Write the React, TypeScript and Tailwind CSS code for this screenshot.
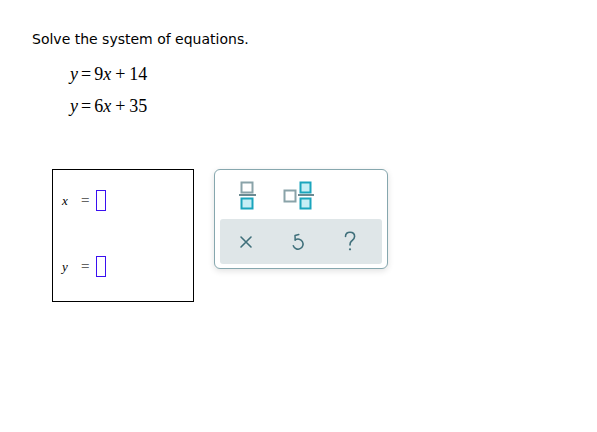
import React from "react";

function FracIcon() {
  return (
    <svg width="20" height="30" viewBox="0 0 20 30">
      <rect x="3.5" y="2.5" width="11" height="10" fill="#fff" stroke="#8aa3a9" strokeWidth="2" />
      <rect x="1" y="14" width="17" height="2" fill="#6b8a92" />
      <rect x="3.5" y="18.5" width="11" height="10" fill="#c6eef5" stroke="#1aa5bd" strokeWidth="2" />
    </svg>
  );
}

function MixedIcon() {
  return (
    <svg width="32" height="30" viewBox="0 0 32 30">
      <rect x="1.5" y="10.5" width="11" height="11" fill="#fff" stroke="#8aa3a9" strokeWidth="2" />
      <rect x="17.5" y="2.5" width="10" height="10" fill="#c6eef5" stroke="#1aa5bd" strokeWidth="2" />
      <rect x="15" y="14" width="16" height="2" fill="#6b8a92" />
      <rect x="17.5" y="18.5" width="10" height="10" fill="#c6eef5" stroke="#1aa5bd" strokeWidth="2" />
    </svg>
  );
}

function XIcon() {
  return (
    <svg width="14" height="14" viewBox="0 0 14 14">
      <path d="M2 2 L12 12 M12 2 L2 12" stroke="#3f6f7a" strokeWidth="1.6" strokeLinecap="round" />
    </svg>
  );
}

function UndoIcon() {
  return (
    <svg width="16" height="20" viewBox="0 0 16 20">
      <path d="M5.2 8 A5 5 0 1 1 3.3 13.71" fill="none" stroke="#3f6f7a" strokeWidth="1.5" strokeLinecap="round" />
      <path d="M8.8 2.6 L5 3.4 L5.2 8" fill="none" stroke="#3f6f7a" strokeWidth="1.5" strokeLinecap="round" strokeLinejoin="round" />
    </svg>
  );
}

function QIcon() {
  return (
    <svg width="14" height="22" viewBox="0 0 14 22">
      <path d="M2.5 5.5 C2.5 2.5 4.5 1.2 7 1.2 C9.8 1.2 11.6 3 11.6 5.5 C11.6 8 9.6 9 8.2 10.3 C7.2 11.2 7 12 7 14" fill="none" stroke="#3f6f7a" strokeWidth="1.6" strokeLinecap="round" />
      <circle cx="7" cy="18.3" r="1.1" fill="#3f6f7a" />
    </svg>
  );
}

function Eq({ a, b }: { a: string; b: string }) {
  return (
    <div className="flex items-baseline text-[18px] leading-[32px] text-black" style={{ fontFamily: '"Liberation Serif", serif' }}>
      <span className="italic">y</span>
      <span className="mx-[3px]">=</span>
      <span>{a}</span>
      <span className="italic">x</span>
      <span className="mx-[4px]">+</span>
      <span>{b}</span>
    </div>
  );
}

function Row({ v }: { v: string }) {
  return (
    <div className="flex items-center h-[21px]" style={{ fontFamily: '"Liberation Serif", serif' }}>
      <span className="italic text-[13px] w-[19px]">{v}</span>
      <span className="text-[15px] font-bold text-[#666] w-[15px]">=</span>
      <span className="w-[10px] h-[21px] border-[1.5px] border-[#3a10f0]" />
    </div>
  );
}

export default function App() {
  return (
    <div className="w-[597px] h-[432px] bg-white pl-[32px] pt-[30px]" style={{ fontFamily: '"DejaVu Sans", Verdana, sans-serif' }}>
      <div className="text-[14px] leading-[18px] text-black">Solve the system of equations.</div>
      <div className="ml-[38px] mt-[10px] flex flex-col">
        <Eq a="9" b="14" />
        <Eq a="6" b="35" />
      </div>
      <div className="mt-[47px] ml-[20px] flex items-start gap-[20px]">
        <div className="w-[142px] h-[133px] border border-black flex flex-col pl-[9px] pt-[20px] gap-[45px]">
          <Row v="x" />
          <Row v="y" />
        </div>
        <div className="w-[174px] h-[100px] rounded-[6px] border border-[#86a7ae] bg-white shadow-[0_2px_6px_rgba(0,0,0,0.12)] flex flex-col px-[5px] pb-[4px]">
          <div className="flex items-center h-[49px] pl-[18px] gap-[25px] pt-[1px]">
            <FracIcon />
            <MixedIcon />
          </div>
          <div className="flex-1 bg-[#dfe6e8] rounded-[3px] flex items-center justify-between pl-[19px] pr-[25px]">
            <XIcon />
            <UndoIcon />
            <QIcon />
          </div>
        </div>
      </div>
    </div>
  );
}
